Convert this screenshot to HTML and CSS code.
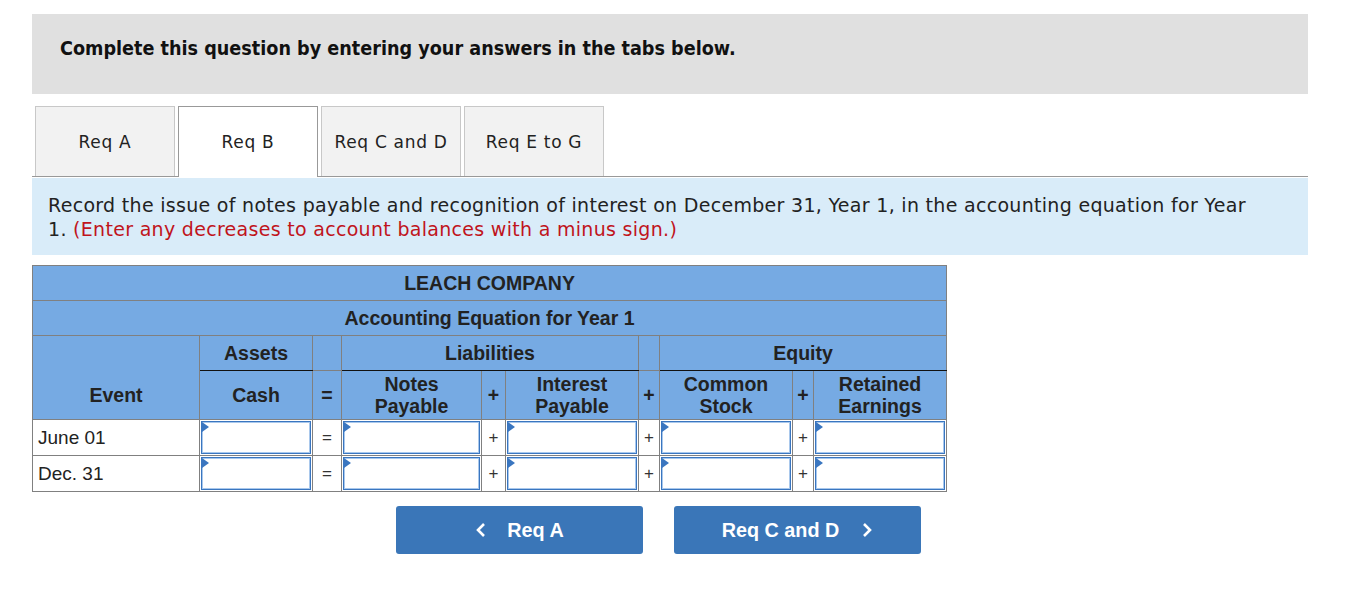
FILE: index.html
```html
<!DOCTYPE html>
<html lang="en">
<head>
    <meta charset="UTF-8">
    <title>Req B</title>
    <link rel="stylesheet" href="styles.css">
</head>
<body>
    <div class="page">
        <div class="banner">
            <h1>Complete this question by entering your answers in the tabs below.</h1>
        </div>

        <div class="tabs">
            <div class="tab">Req A</div>
            <div class="tab active">Req B</div>
            <div class="tab">Req C and D</div>
            <div class="tab">Req E to G</div>
        </div>

        <div class="instructions">
            Record the issue of notes payable and recognition of interest on December 31, Year 1, in the accounting equation for Year 1. <span class="note">(Enter any decreases to account balances with a minus sign.)</span>
        </div>

        <table class="equation">
            <colgroup>
                <col class="c-event">
                <col class="c-amt1">
                <col class="c-op1">
                <col class="c-amt2">
                <col class="c-op2">
                <col class="c-amt">
                <col class="c-op">
                <col class="c-amt">
                <col class="c-op">
                <col class="c-amt">
            </colgroup>
            <tr class="head title">
                <th colspan="10">LEACH COMPANY</th>
            </tr>
            <tr class="head title">
                <th colspan="10">Accounting Equation for Year 1</th>
            </tr>
            <tr class="head group">
                <th class="no-bottom"></th>
                <th class="dark">Assets</th>
                <th></th>
                <th class="dark" colspan="3">Liabilities</th>
                <th></th>
                <th class="dark" colspan="3">Equity</th>
            </tr>
            <tr class="head cols">
                <th class="no-top">Event</th>
                <th>Cash</th>
                <th>=</th>
                <th>Notes<br>Payable</th>
                <th>+</th>
                <th>Interest<br>Payable</th>
                <th>+</th>
                <th>Common<br>Stock</th>
                <th>+</th>
                <th>Retained<br>Earnings</th>
            </tr>
            <tr class="row">
                <td class="event">June 01</td>
                <td class="cell"><input type="text"></td>
                <td class="op">=</td>
                <td class="cell"><input type="text"></td>
                <td class="op">+</td>
                <td class="cell"><input type="text"></td>
                <td class="op">+</td>
                <td class="cell"><input type="text"></td>
                <td class="op">+</td>
                <td class="cell"><input type="text"></td>
            </tr>
            <tr class="row">
                <td class="event">Dec. 31</td>
                <td class="cell"><input type="text"></td>
                <td class="op">=</td>
                <td class="cell"><input type="text"></td>
                <td class="op">+</td>
                <td class="cell"><input type="text"></td>
                <td class="op">+</td>
                <td class="cell"><input type="text"></td>
                <td class="op">+</td>
                <td class="cell"><input type="text"></td>
            </tr>
        </table>

        <div class="nav">
            <button class="nav-btn prev">
                <svg width="12" height="16" viewBox="0 0 12 16"><path d="M9 2 L3 8 L9 14" fill="none" stroke="white" stroke-width="2.6"/></svg>
                <span>Req A</span>
            </button>
            <button class="nav-btn next">
                <span>Req C and D</span>
                <svg width="12" height="16" viewBox="0 0 12 16"><path d="M3 2 L9 8 L3 14" fill="none" stroke="white" stroke-width="2.6"/></svg>
            </button>
        </div>
    </div>
</body>
</html>
```

FILE: styles.css
```css
body {
    margin: 0;
    padding: 0;
    background: #fff;
    font-family: 'DejaVu Sans', Verdana, sans-serif;
    color: #222;
}

.page {
    width: 1276px;
    margin-left: 32px;
    padding-top: 14px;
}

.banner {
    background: #e0e0e0;
    height: 80px;
    display: flex;
    align-items: center;
    padding-left: 28px;
}

.banner h1 {
    margin: 0;
    font-family: 'DejaVu Sans Condensed', 'DejaVu Sans', sans-serif;
    font-size: 19.6px;
    font-weight: bold;
    color: #111;
    padding-bottom: 12px;
}

.tabs {
    display: flex;
    gap: 3px;
    margin-top: 12px;
    padding-left: 3px;
    border-bottom: 1px solid #999;
    height: 70px;
}

.tab {
    width: 138px;
    height: 69px;
    background: #f2f2f2;
    border: 1px solid #c8c8c8;
    border-bottom: none;
    display: flex;
    align-items: center;
    justify-content: center;
    font-size: 17px;
    letter-spacing: 0.7px;
    color: #222;
}

.tab.active {
    background: #fff;
    border-color: #999;
    height: 70px;
    margin-bottom: -1px;
}

.instructions {
    margin-top: 1px;
    background: #d9ecf9;
    padding: 15px 50px 14px 16px;
    font-size: 19px;
    letter-spacing: 0.3px;
    line-height: 24px;
    color: #222;
}

.note {
    color: #c0141c;
}

.equation {
    margin-top: 10px;
    width: 914px;
    border-collapse: collapse;
    font-family: 'Liberation Sans', Arial, sans-serif;
    font-size: 19.5px;
    table-layout: fixed;
    border: 1px solid #808080;
}

.c-event { width: 167px; }
.c-amt1 { width: 113px; }
.c-op1 { width: 29px; }
.c-amt2 { width: 140px; }
.c-op2 { width: 24px; }
.c-amt { width: 133px; }
.c-op { width: 21px; }

.equation th {
    background: #76aae3;
    border: 1px solid #808080;
    color: #222;
    font-weight: bold;
    padding: 0;
    text-align: center;
}

.title th {
    height: 34px;
}

.group th {
    height: 34px;
}

.group th.dark {
    border-bottom: 1px solid #111;
}

.group th.no-bottom {
    border-bottom: none;
}

.cols th {
    height: 48px;
    line-height: 22px;
}

.cols th.no-top {
    border-top: none;
}

.equation td {
    border: 1px solid #808080;
    padding: 0;
}

.equation td.event {
    padding-left: 5px;
    font-size: 19px;
    color: #222;
}

.equation td.op {
    text-align: center;
    font-size: 17px;
    color: #333;
}

.equation td.cell {
    padding: 1px;
    position: relative;
}

.equation td.cell::before {
    content: "";
    position: absolute;
    left: 2px;
    top: 2px;
    border-top: 5px solid transparent;
    border-bottom: 5px solid transparent;
    border-left: 7px solid #3a76c0;
}

.equation input {
    display: block;
    box-sizing: border-box;
    width: 100%;
    height: 33px;
    margin: 0;
    border: 1px solid #3a76c0;
    box-shadow: inset 0 0 0 1px #a9c8ec;
    background: #fff;
    outline: none;
}

.nav {
    display: flex;
    gap: 31px;
    margin-top: 14px;
    padding-left: 364px;
}

.nav-btn {
    width: 247px;
    height: 48px;
    background: #3a76b8;
    border: none;
    border-radius: 3px;
    color: #fff;
    font-family: 'Liberation Sans', Arial, sans-serif;
    font-size: 19.8px;
    font-weight: bold;
    display: flex;
    align-items: center;
    justify-content: center;
    gap: 20px;
    cursor: pointer;
}

.nav-btn.next {
    gap: 22px;
}
```
